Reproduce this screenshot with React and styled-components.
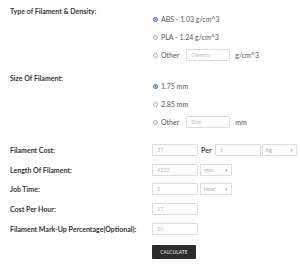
import React from 'react'
import styled, { createGlobalStyle } from 'styled-components'

const GlobalStyle = createGlobalStyle`
  body {
    margin: 0;
    background: #fff;
    font-family: Lato, 'Open Sans', sans-serif;
  }
`

const Dropdown = ({ width, ml, value }) => (
  <SelectWrap width={width} ml={ml}>
    <Select>
      <option>{value}</option>
    </Select>
    <Caret>▾</Caret>
  </SelectWrap>
)

const App = () => {
  return (
    <Page>
      <GlobalStyle />
      <Section>
        <Label>Type of Filament &amp; Density:</Label>
        <Options>
          <Option>
            <Radio checked />
            ABS - 1.03 g/cm^3
          </Option>
          <Option>
            <Radio />
            PLA - 1.24 g/cm^3
          </Option>
          <Option>
            <Radio />
            Other
            <Input width={44} placeholder="Density" ml={7} />
            <Unit>g/cm^3</Unit>
          </Option>
        </Options>
      </Section>
      <Section top={10}>
        <Label>Size Of Filament:</Label>
        <Options>
          <Option>
            <Radio checked />
            1.75 mm
          </Option>
          <Option>
            <Radio />
            2.85 mm
          </Option>
          <Option>
            <Radio />
            Other
            <Input width={44} placeholder="Size" ml={7} />
            <Unit>mm</Unit>
          </Option>
        </Options>
      </Section>
      <Fields>
        <FieldRow>
          <FieldLabel>Filament Cost:</FieldLabel>
          <Controls>
            <Input width={46} placeholder="37" />
            <Per>Per</Per>
            <Input width={46} placeholder="1" />
            <Dropdown width={35} ml={1} value="Kg" />
          </Controls>
        </FieldRow>
        <FieldRow>
          <FieldLabel>Length Of Filament:</FieldLabel>
          <Controls>
            <Input width={46} placeholder="4322" />
            <Dropdown width={32} ml={2} value="mm" />
          </Controls>
        </FieldRow>
        <FieldRow>
          <FieldLabel>Job Time:</FieldLabel>
          <Controls>
            <Input width={46} placeholder="3" />
            <Dropdown width={32} ml={2} value="hour" />
          </Controls>
        </FieldRow>
        <FieldRow>
          <FieldLabel>Cost Per Hour:</FieldLabel>
          <Controls>
            <Input width={46} placeholder="17" />
          </Controls>
        </FieldRow>
        <FieldRow>
          <FieldLabel>Filament Mark-Up Percentage(Optional):</FieldLabel>
          <Controls>
            <Input width={46} placeholder="30" />
          </Controls>
        </FieldRow>
      </Fields>
      <ButtonRow>
        <Button>CALCULATE</Button>
      </ButtonRow>
    </Page>
  )
}

export default App

const Page = styled.div`
  width: 300px;
  height: 264px;
  box-sizing: border-box;
  padding: 7px 0 0 10px;
  overflow: hidden;
`

const Section = styled.div`
  display: grid;
  grid-template-columns: 142px 1fr;
  margin-top: ${props => props.top || 0}px;
`

const Label = styled.div`
  font-size: 7px;
  line-height: 8px;
  font-weight: 700;
  color: #333;
`

const Options = styled.div`
  display: flex;
  flex-direction: column;
  margin-top: 3px;
`

const Option = styled.div`
  display: flex;
  align-items: center;
  height: 18px;
  font-size: 7px;
  color: #555;
`

const Radio = styled.span`
  width: 5px;
  height: 5px;
  box-sizing: border-box;
  border-radius: 50%;
  margin: 0 3px 0 1px;
  border: ${props => (props.checked ? '1.5px solid #3b7de0' : '0.6px solid #aaa')};
  background: ${props => (props.checked ? '#3b7de0' : '#fff')};
  box-shadow: ${props => (props.checked ? 'inset 0 0 0 0.6px #fff' : 'none')};
`

const Input = styled.input`
  width: ${props => props.width}px;
  height: 12px;
  box-sizing: border-box;
  margin: 0 0 0 ${props => props.ml || 0}px;
  padding: 0 4px;
  border: 0.6px solid #dcdcdc;
  border-radius: 1px;
  font-family: Lato, sans-serif;
  font-size: 5.5px;
  color: #aaa;
  background: #fff;
  outline: none;

  &::placeholder {
    color: #bdbdbd;
  }
`

const Unit = styled.span`
  margin-left: 5px;
  font-size: 7px;
  color: #555;
`

const Fields = styled.div`
  display: flex;
  flex-direction: column;
  margin-top: 9px;
`

const FieldRow = styled.div`
  display: grid;
  grid-template-columns: 142px 1fr;
  align-items: center;
  height: 19.7px;
`

const FieldLabel = styled.div`
  font-size: 7px;
  font-weight: 700;
  color: #333;
`

const Controls = styled.div`
  display: flex;
  align-items: center;
`

const Per = styled.span`
  font-size: 7px;
  font-weight: 700;
  color: #444;
  margin: 0 3px 0 3px;
`

const SelectWrap = styled.div`
  position: relative;
  width: ${props => props.width}px;
  height: 12px;
  margin-left: ${props => props.ml || 1}px;
  font-size: 0;
`

const Select = styled.select`
  display: block;
  appearance: none;
  width: 100%;
  height: 12px;
  box-sizing: border-box;
  margin: 0;
  padding: 0 3px;
  border: 0.6px solid #dcdcdc;
  border-radius: 1px;
  font-family: Lato, sans-serif;
  font-size: 5.5px;
  line-height: 10px;
  color: #aaa;
  background: #fff;
  outline: none;
`

const Caret = styled.span`
  position: absolute;
  right: 4px;
  top: 2px;
  font-size: 5px;
  line-height: 8px;
  color: #aaa;
  pointer-events: none;
`

const ButtonRow = styled.div`
  padding-left: 142px;
  margin-top: 7px;
`

const Button = styled.button`
  display: block;
  width: 44px;
  height: 14px;
  padding: 0;
  border: none;
  border-radius: 1px;
  background: #2b2b2b;
  color: #eee;
  font-family: Lato, sans-serif;
  font-size: 4.8px;
  letter-spacing: 0.1px;
`
